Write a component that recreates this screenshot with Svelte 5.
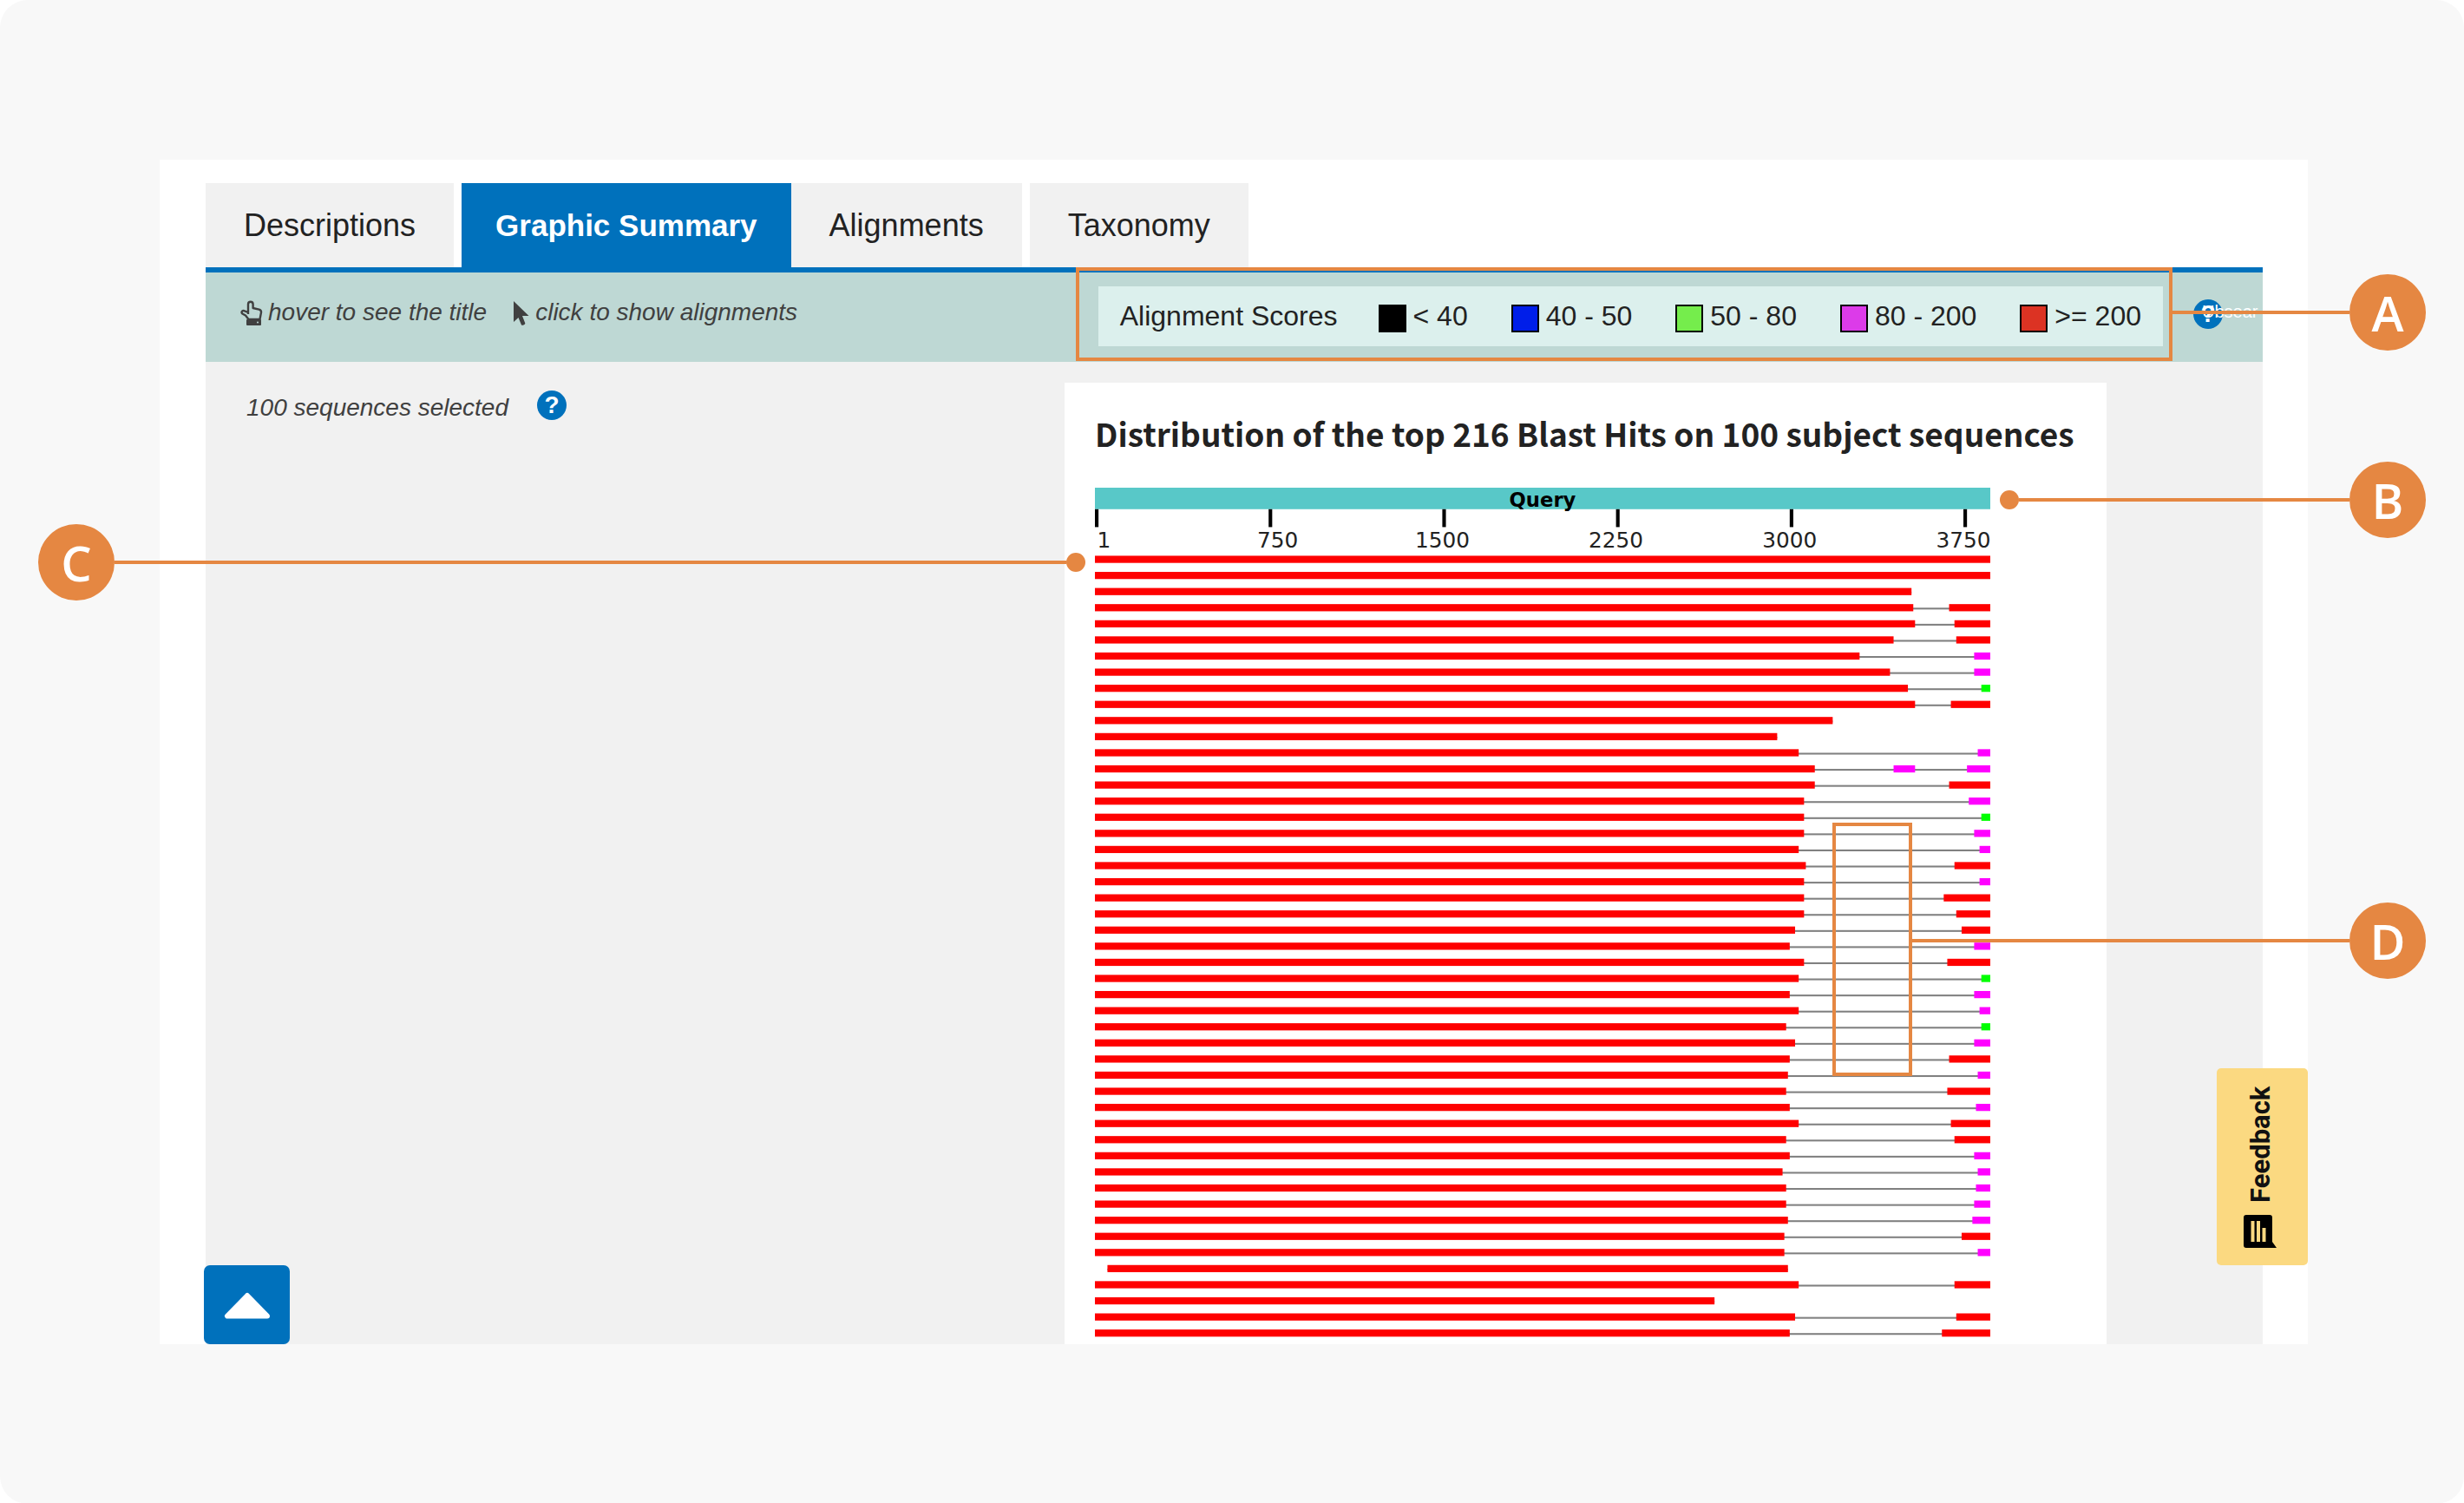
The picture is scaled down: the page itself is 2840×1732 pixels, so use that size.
<script>
    // colours used for the hit segments
    const colors = { r: "#ff0000", m: "#ff00ff", g: "#00ff00" };

    const tabs = ["Descriptions", "Graphic Summary", "Alignments", "Taxonomy"];
    let active = "Graphic Summary";

    const scores = [
        { label: "< 40", cls: "black" },
        { label: "40 - 50", cls: "blue" },
        { label: "50 - 80", cls: "green" },
        { label: "80 - 200", cls: "pink" },
        { label: ">= 200", cls: "red" }
    ];

    // label position is not always centred on its tick
    const ticks = [
        { at: 0, text: "1", x: 5 },
        { at: 97, text: "750", x: 102 },
        { at: 194, text: "1500", x: 194 },
        { at: 291, text: "2250", x: 291 },
        { at: 388, text: "3000", x: 388 },
        { at: 485, text: "3750", x: 485 }
    ];

    // "start-end colour" for each segment, the chart is 500 units wide
    const rows = [
        "0-500r", "0-500r", "0-456r", "0-457r 477-500r", "0-458r 480-500r",
        "0-446r 481-500r", "0-427r 491-500m", "0-444r 491-500m", "0-454r 495-500g",
        "0-458r 478-500r", "0-412r", "0-381r", "0-393r 493-500m",
        "0-402r 446-458m 487-500m", "0-402r 477-500r", "0-396r 488-500m",
        "0-396r 495-500g", "0-396r 491-500m", "0-393r 494-500m", "0-397r 480-500r",
        "0-396r 494-500m", "0-396r 474-500r", "0-396r 481-500r", "0-391r 484-500r",
        "0-388r 491-500m", "0-396r 476-500r", "0-393r 495-500g", "0-388r 491-500m",
        "0-393r 494-500m", "0-386r 495-500g", "0-391r 491-500m", "0-388r 477-500r",
        "0-387r 493-500m", "0-386r 476-500r", "0-388r 492-500m", "0-393r 478-500r",
        "0-386r 480-500r", "0-388r 491-500m", "0-384r 493-500m", "0-386r 492-500m",
        "0-386r 491-500m", "0-387r 490-500m", "0-385r 484-500r", "0-385r 493-500m",
        "7-387r", "0-393r 480-500r", "0-346r", "0-391r 481-500r", "0-388r 473-500r"
    ].map((row) =>
        row.split(" ").map((seg) => {
            const [start, end] = seg.slice(0, -1).split("-").map(Number);
            return { start, end, color: colors[seg.slice(-1)] };
        })
    );
</script>

<main class="page">
    <section class="panel">
        <nav class="tabs">
            {#each tabs as tab}
                <button class="tab" class:active={tab === active} on:click={() => (active = tab)}>{tab}</button>
            {/each}
        </nav>

        <div class="toolbar">
            <div class="hints">
                <span class="hint">
                    <svg width="26" height="29" viewBox="0 0 26 29">
                        <path d="M9 16V4.500a2.800 2.800 0 0 1 5.600 0V9l7 1.600c1.800.5 2.600 1.700 2.400 3.500L22.500 22H9.500L6 17.500 2.400 15.500c-1.800-1.500-.4-4 1.800-3.400L9 14" fill="none" stroke="#404040" stroke-width="2.400" stroke-linejoin="round" />
                        <rect x="7" y="22" width="17" height="7" rx="1" fill="#404040" />
                        <circle cx="20" cy="25.500" r="1" fill="#bed8d4" />
                    </svg>
                    hover to see the title
                </span>
                <span class="hint">
                    <svg width="20" height="29" viewBox="0 0 20 29">
                        <path d="M1 1v24l5.500-5 3.500 8.500q1 .6 3-.3 1.500-.7 1.300-1.700L11 18h7.500z" fill="#404040" />
                    </svg>
                    click to show alignments
                </span>
            </div>

            <div class="legend">
                <span>Alignment Scores</span>
                <ul>
                    {#each scores as score}
                        <li><i class="swatch {score.cls}"></i>{score.label}</li>
                    {/each}
                </ul>
            </div>

            <button class="help" aria-label="Help">
                <span class="mark">?</span>
                <span class="tip">Ubsear</span>
            </button>
        </div>

        <div class="body">
            <div class="selected">
                <span>100 sequences selected</span>
                <button class="help" aria-label="Help"><span class="mark">?</span></button>
            </div>

            <div class="card">
                <h2>Distribution of the top 216 Blast Hits on 100 subject sequences</h2>
                <svg class="chart" viewBox="0 0 500 478">
                    <rect width="500" height="12" fill="#58c8c8" />
                    <text class="query" x="250" y="10.500">Query</text>
                    {#each ticks as tick}
                        <rect x={tick.at} y="12" width="2" height="10" />
                        <text class="num" x={tick.x} y="33.500">{tick.text}</text>
                    {/each}
                    {#each rows as row, i}
                        <rect x={row[0].start} y={40 + i * 9} width={row[row.length - 1].end - row[0].start} height="1" fill="#808080" />
                        {#each row as seg}
                            <rect x={seg.start} y={38 + i * 9} width={seg.end - seg.start} height="4" fill={seg.color} />
                        {/each}
                    {/each}
                </svg>
            </div>
        </div>

        <button class="to-top" aria-label="Back to top">
            <svg width="54" height="32" viewBox="0 0 54 32">
                <path d="M27 4 4 27.500h46z" fill="#fff" stroke="#fff" stroke-width="6" stroke-linejoin="round" />
            </svg>
        </button>

        <button class="feedback">
            <svg width="38" height="38" viewBox="0 0 38 38">
                <path d="M3 0h32a3 3 0 0 1 3 3v27a3 3 0 0 1-3 3H7l-7 5V3a3 3 0 0 1 3-3z" />
                <path d="M7 10.500h24M7 17h24M7 23.500h16" stroke="#fbd981" stroke-width="4" />
            </svg>
            Feedback
        </button>
    </section>

    <!-- callouts drawn over the panel -->
    <div class="frame frame-a"></div>
    <div class="frame frame-d"></div>
    <div class="callout a"><i class="line"></i><b>A</b></div>
    <div class="callout b"><i class="dot"></i><i class="line"></i><b>B</b></div>
    <div class="callout c"><b>C</b><i class="line"></i><i class="dot"></i></div>
    <div class="callout d"><i class="line"></i><b>D</b></div>
</main>

<style>
    :global(body) {
        margin: 0;
        background: #fff;
    }

    .page {
        position: relative;
        box-sizing: border-box;
        min-height: 100vh;
        padding: 184px 180px 184px 184px;
        border-radius: 32px;
        background: #f8f8f8;
        font-family: "Liberation Sans", Arial, sans-serif;
        color: #222;
    }

    .panel {
        position: relative;
        padding: 27px 52px 0 53px;
        background: #fff;
    }

    button {
        border: none;
        padding: 0;
        font-family: inherit;
        color: inherit;
        cursor: pointer;
    }

    .tabs {
        display: flex;
        gap: 9px;
        border-bottom: 6px solid #0071bc;
    }

    .tab {
        height: 97px;
        padding: 0 44px;
        background: #f1f1f1;
        font-size: 36px;
    }

    .tab.active {
        margin-right: -9px;
        padding: 0 39px;
        background: #0071bc;
        color: #fff;
        font-size: 35px;
        font-weight: bold;
    }

    .toolbar {
        display: flex;
        align-items: flex-start;
        padding: 16px 46px 18px 40px;
        background: #bed8d4;
    }

    .hints {
        display: flex;
        gap: 30px;
        margin-right: auto;
    }

    .hint {
        display: flex;
        align-items: center;
        gap: 6px;
        line-height: 60px;
        font-size: 28px;
        font-style: italic;
        color: #404040;
    }

    .legend {
        display: flex;
        align-items: center;
        gap: 47px;
        height: 69px;
        margin-right: 35px;
        padding: 0 25px;
        background: #dcf0ed;
        font-size: 32px;
    }

    .legend ul {
        display: flex;
        gap: 50px;
        margin: 0;
        padding: 0;
        list-style: none;
    }

    .legend li {
        display: flex;
        align-items: center;
        gap: 8px;
    }

    .swatch {
        box-sizing: border-box;
        width: 32px;
        height: 32px;
        margin-top: 4px;
        border: 2px solid #000;
    }

    .black { background: #000; }
    .blue { background: #001ee9; }
    .green { background: #75ed4c; }
    .pink { background: #dc3be9; }
    .red { background: #dc3323; }

    .help {
        position: relative;
        width: 34px;
        height: 34px;
        border-radius: 50%;
        background: #0071bc;
        color: #fff;
    }

    .toolbar .help {
        margin-top: 15px;
    }

    .mark {
        display: block;
        font-size: 28px;
        line-height: 34px;
        font-weight: bold;
    }

    .tip {
        position: absolute;
        left: 10px;
        top: 3px;
        font-size: 20px;
    }

    .body {
        display: flex;
        justify-content: space-between;
        align-items: flex-start;
        padding: 24px 180px 0 47px;
        background: #f1f1f1;
    }

    .selected {
        display: flex;
        gap: 33px;
        padding-top: 9px;
        font-size: 28px;
        line-height: 40px;
        font-style: italic;
        color: #404040;
    }

    .selected .mark {
        font-style: normal;
    }

    .card {
        box-sizing: border-box;
        width: 1201px;
        padding: 34px 35px 0;
        background: #fff;
    }

    h2 {
        margin: 0 0 39px;
        font: bold 37px/48px "Noto Sans CJK SC", sans-serif;
        white-space: nowrap;
    }

    .chart {
        display: block;
        width: 100%;
        max-width: 1032px;
        font-family: "DejaVu Sans", Verdana, sans-serif;
        text-anchor: middle;
    }

    .query {
        font-size: 11px;
        font-weight: bold;
    }

    .num {
        font-size: 12px;
        fill: #222;
    }

    .to-top {
        position: absolute;
        left: 51px;
        bottom: 0;
        display: flex;
        align-items: center;
        justify-content: center;
        width: 99px;
        height: 91px;
        padding-top: 3px;
        border-radius: 7px;
        background: #0071bc;
    }

    .feedback {
        position: absolute;
        right: 0;
        bottom: 91px;
        display: flex;
        align-items: center;
        justify-content: center;
        gap: 14px;
        width: 105px;
        height: 227px;
        padding-left: 4px;
        border-radius: 5px;
        background: #fbd981;
        color: #111;
        font: bold 31px Roboto, sans-serif;
        writing-mode: vertical-rl;
        transform: rotate(180deg);
    }

    .feedback svg {
        transform: rotate(90deg);
    }

    .frame {
        position: absolute;
        box-sizing: border-box;
        border: 4px solid #e58742;
    }

    .frame-a {
        left: 1240px;
        right: 336px;
        top: 308px;
        height: 108px;
    }

    .frame-d {
        left: 2112px;
        right: 636px;
        top: 948px;
        height: 292px;
    }

    .callout {
        position: absolute;
        right: 44px;
        display: flex;
        align-items: center;
    }

    .callout b {
        width: 88px;
        border-radius: 50%;
        background: #e58742;
        color: #fff;
        font: 600 56px/88px "Open Sans", sans-serif;
        text-align: center;
    }

    .line {
        flex: 1;
        height: 4px;
        background: #e58742;
    }

    .dot {
        width: 22px;
        height: 22px;
        border-radius: 50%;
        background: #e58742;
    }

    .a { top: 316px; left: 2504px; }
    .b { top: 532px; left: 2305px; }
    .c { top: 604px; left: 44px; right: 1589px; }
    .d { top: 1040px; left: 2204px; }
</style>
